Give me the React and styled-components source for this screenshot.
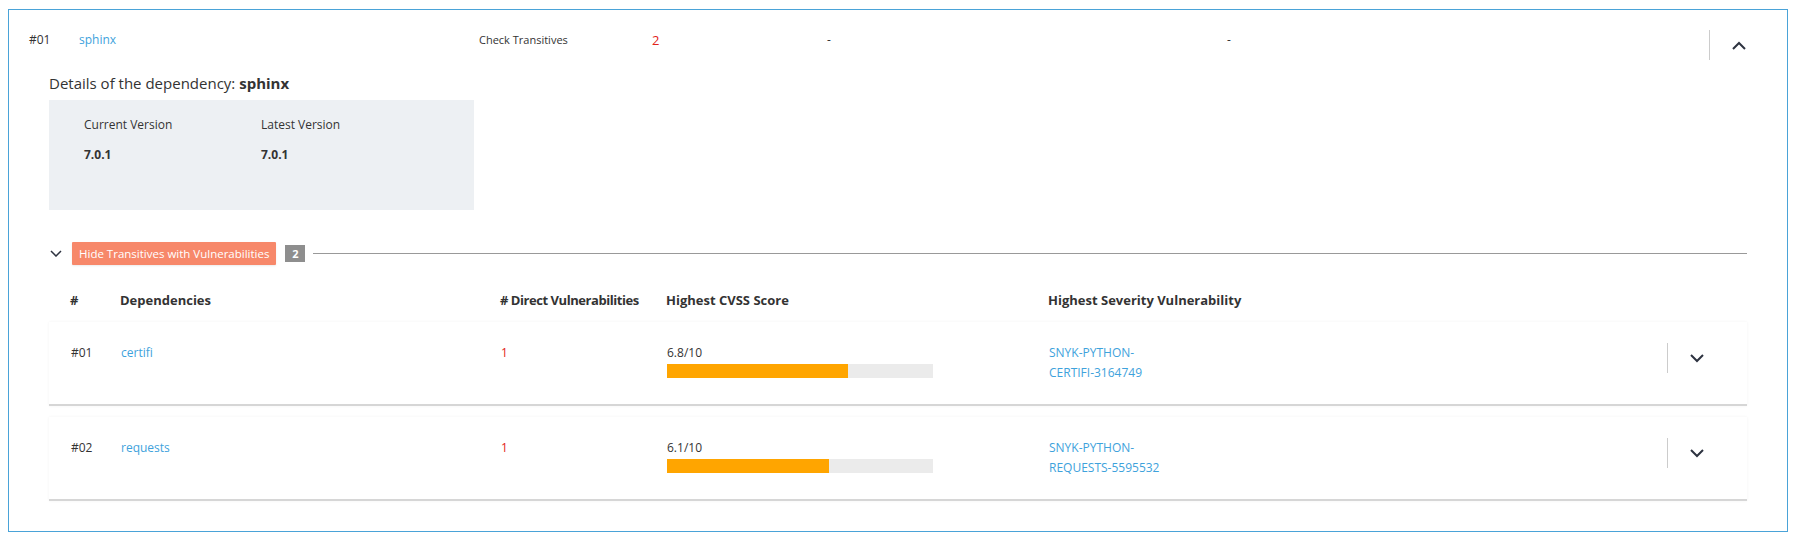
import React from 'react'
import styled, { createGlobalStyle } from 'styled-components'

const GlobalStyle = createGlobalStyle`
    html, body {
        margin: 0;
        padding: 0;
        background: #ffffff;
    }
    body {
        font-family: "Open Sans", "Noto Sans", sans-serif;
        color: #333333;
    }
`

const Page = styled.div`
    padding: 9px 10px 0 8px;
`

const Panel = styled.div`
    border: 1px solid #4aa3d8;
    padding: 20px 0 30px;
`

const TopRow = styled.div`
    display: grid;
    grid-template-columns: 50px 400px 173px 175px 400px 1fr auto;
    align-items: start;
    padding: 0 41px 0 20px;
`

const Cell = styled.div`
    font-size: ${props => props.size || 12}px;
    line-height: 20px;
    color: ${props => props.color || '#333333'};
    font-weight: ${props => (props.bold ? 700 : 400)};
`

const LinkText = styled.a`
    font-size: 12px;
    line-height: 20px;
    color: #3ea2dc;
    text-decoration: none;
    cursor: pointer;
`

const Toggle = styled.div`
    display: flex;
    align-items: center;
    height: 30px;
`

const Divider = styled.span`
    width: 1px;
    height: 30px;
    background: #cccccc;
`

const ChevronButton = styled.button`
    display: flex;
    align-items: center;
    justify-content: center;
    border: none;
    background: none;
    padding: 0;
    margin-left: 22px;
    width: 14px;
    height: 14px;
    cursor: pointer;
`

const Details = styled.div`
    padding: 0 40px;
`

const Heading = styled.h3`
    margin: 13px 0 0;
    font-size: 15px;
    font-weight: 400;
    line-height: 20px;
    color: #333333;

    b {
        font-weight: 700;
    }
`

const VersionBox = styled.div`
    margin-top: 7px;
    width: 425px;
    height: 110px;
    box-sizing: border-box;
    background: #edf0f3;
    padding: 15px 35px;
    display: grid;
    grid-template-columns: 177px 177px;
    grid-template-rows: 20px 20px;
    row-gap: 10px;
    font-size: 12px;
    line-height: 20px;
`

const VersionValue = styled.div`
    font-weight: 700;
`

const TransitiveBar = styled.div`
    margin-top: 32px;
    display: flex;
    align-items: center;
    height: 23px;
`

const SmallChevron = styled.span`
    display: flex;
    width: 12px;
    margin: 0 10px 0 1px;
`

const HideButton = styled.button`
    height: 23px;
    padding: 0 7px;
    border: none;
    border-radius: 1px;
    background: #f7886a;
    color: #ffffff;
    font-family: inherit;
    font-size: 11.5px;
    line-height: 23px;
    box-shadow: 0 1px 2px rgba(0, 0, 0, 0.08);
    cursor: pointer;
`

const CountBadge = styled.span`
    margin-left: 9px;
    width: 20px;
    height: 17px;
    background: #8e8e8e;
    color: #ffffff;
    font-size: 11px;
    font-weight: 700;
    line-height: 17px;
    text-align: center;
`

const Rule = styled.span`
    flex: 1;
    height: 1px;
    margin-left: 8px;
    background: #999999;
`

const columns = '50px 380px 166px 382px 1fr auto'

const HeaderRow = styled.div`
    margin-top: 25px;
    display: grid;
    grid-template-columns: ${columns};
    padding-left: 21px;
    font-size: 13px;
    font-weight: 700;
    line-height: 20px;
    color: #333333;
`

const HeaderCell = styled.div`
    letter-spacing: ${props => (props.tight ? '-0.45px' : 'normal')};
    white-space: nowrap;
`

const Cards = styled.div`
    margin-top: 12px;
    display: flex;
    flex-direction: column;
    gap: 11px;
`

const Card = styled.div`
    display: grid;
    grid-template-columns: ${columns};
    align-items: start;
    padding: 21px 43px 21px 22px;
    background: #ffffff;
    border-bottom: 2px solid #d6d6d6;
    box-shadow: 0 0 3px rgba(0, 0, 0, 0.05);
`

const Score = styled.div`
    display: flex;
    flex-direction: column;
`

const Track = styled.div`
    margin-top: 1px;
    width: 266px;
    height: 14px;
    background: #ebebeb;
`

const Fill = styled.div`
    height: 100%;
    background: #ffa500;
`

const VulnLink = styled(LinkText)`
    display: block;
`

const Chevron = ({ up }) => (
    <svg width="14" height="9" viewBox="0 0 14 9" fill="none">
        <polyline
            points={up ? '1,8 7,2 13,8' : '1,1 7,7 13,1'}
            stroke="#2d3340"
            strokeWidth="2"
        />
    </svg>
)

const transitives = [
    { id: '#01', name: 'certifi', direct: 1, score: 6.8, vuln: ['SNYK-PYTHON-', 'CERTIFI-3164749'] },
    { id: '#02', name: 'requests', direct: 1, score: 6.1, vuln: ['SNYK-PYTHON-', 'REQUESTS-5595532'] },
]

export default function App() {
    return (
        <Page>
            <GlobalStyle />
            <Panel>
                <TopRow>
                    <Cell>#01</Cell>
                    <LinkText>sphinx</LinkText>
                    <Cell size={11}>Check Transitives</Cell>
                    <Cell size={13} color="#e2231a">2</Cell>
                    <Cell>-</Cell>
                    <Cell>-</Cell>
                    <Toggle>
                        <Divider />
                        <ChevronButton>
                            <Chevron up />
                        </ChevronButton>
                    </Toggle>
                </TopRow>
                <Details>
                    <Heading>
                        Details of the dependency: <b>sphinx</b>
                    </Heading>
                    <VersionBox>
                        <div>Current Version</div>
                        <div>Latest Version</div>
                        <VersionValue>7.0.1</VersionValue>
                        <VersionValue>7.0.1</VersionValue>
                    </VersionBox>
                    <TransitiveBar>
                        <SmallChevron>
                            <svg width="12" height="7" viewBox="0 0 12 7" fill="none">
                                <polyline points="1,1 6,6 11,1" stroke="#2d3340" strokeWidth="1.5" />
                            </svg>
                        </SmallChevron>
                        <HideButton>Hide Transitives with Vulnerabilities</HideButton>
                        <CountBadge>2</CountBadge>
                        <Rule />
                    </TransitiveBar>
                    <HeaderRow>
                        <HeaderCell>#</HeaderCell>
                        <HeaderCell>Dependencies</HeaderCell>
                        <HeaderCell tight># Direct Vulnerabilities</HeaderCell>
                        <HeaderCell>Highest CVSS Score</HeaderCell>
                        <HeaderCell>Highest Severity Vulnerability</HeaderCell>
                    </HeaderRow>
                    <Cards>
                        {transitives.map(t => (
                            <Card key={t.id}>
                                <Cell>{t.id}</Cell>
                                <LinkText>{t.name}</LinkText>
                                <Cell color="#e2231a">{t.direct}</Cell>
                                <Score>
                                    <Cell>{t.score}/10</Cell>
                                    <Track>
                                        <Fill style={{ width: `${t.score * 10}%` }} />
                                    </Track>
                                </Score>
                                <div>
                                    {t.vuln.map(line => (
                                        <VulnLink key={line}>{line}</VulnLink>
                                    ))}
                                </div>
                                <Toggle>
                                    <Divider />
                                    <ChevronButton>
                                        <Chevron />
                                    </ChevronButton>
                                </Toggle>
                            </Card>
                        ))}
                    </Cards>
                </Details>
            </Panel>
        </Page>
    )
}
